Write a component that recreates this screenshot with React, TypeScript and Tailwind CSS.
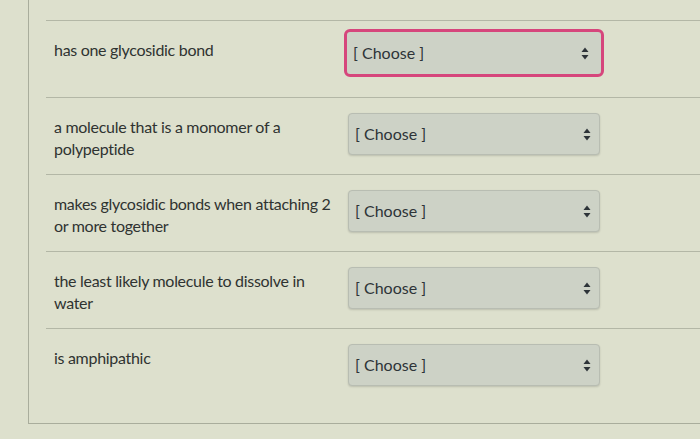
import React from "react";

const rows = [
  { label: "has one glycosidic bond", active: true },
  { label: "a molecule that is a monomer of a polypeptide" },
  { label: "makes glycosidic bonds when attaching 2 or more together" },
  { label: "the least likely molecule to dissolve in water" },
  { label: "is amphipathic" },
];

const Arrows = () => (
  <svg width="8" height="13" viewBox="0 0 8 13" className="shrink-0">
    <path d="M4 0.5 L7.5 5 L0.5 5 Z" fill="#2d3338" />
    <path d="M4 12.5 L7.5 8 L0.5 8 Z" fill="#2d3338" />
  </svg>
);

const Select = ({ active }: { active?: boolean }) =>
  active ? (
    <div className="flex items-center justify-between w-[260px] h-[48px] mt-[8px] pl-[6px] pr-[12px] rounded-[6px] border-[3px] border-[#d6467c] bg-[#cdd2c6]">
      <span className="text-[16px] text-[#2e3438]">[ Choose ]</span>
      <Arrows />
    </div>
  ) : (
    <div className="flex items-center justify-between w-[252px] h-[42px] mt-[15px] ml-[4px] pl-[6px] pr-[8px] rounded-[4px] border border-[#b8bdb2] bg-[#cdd2c6] shadow-[0_1px_2px_rgba(0,0,0,0.15)]">
      <span className="text-[16px] text-[#2e3438]">[ Choose ]</span>
      <Arrows />
    </div>
  );

export default function App() {
  return (
    <div className="w-[700px] h-[439px] overflow-hidden bg-[#dde0cd] font-['Lato','Liberation_Sans',sans-serif]">
      <div className="ml-[28px] h-[424px] border-l border-b border-[#a9ad9c] pl-[17px] pt-[20px]">
        {rows.map((r, i) => (
          <div
            key={i}
            className={`flex items-start border-t border-[#b3b7a6] ${i === rows.length - 1 ? "h-[93px]" : "h-[77px]"}`}
          >
            <div className="w-[298px] pl-[8px] pt-[18px]">
              <p className="w-[285px] text-[16px] leading-[22px] text-[#2f3331] tracking-[-0.3px]">
                {r.label}
              </p>
            </div>
            <Select active={r.active} />
          </div>
        ))}
      </div>
    </div>
  );
}
